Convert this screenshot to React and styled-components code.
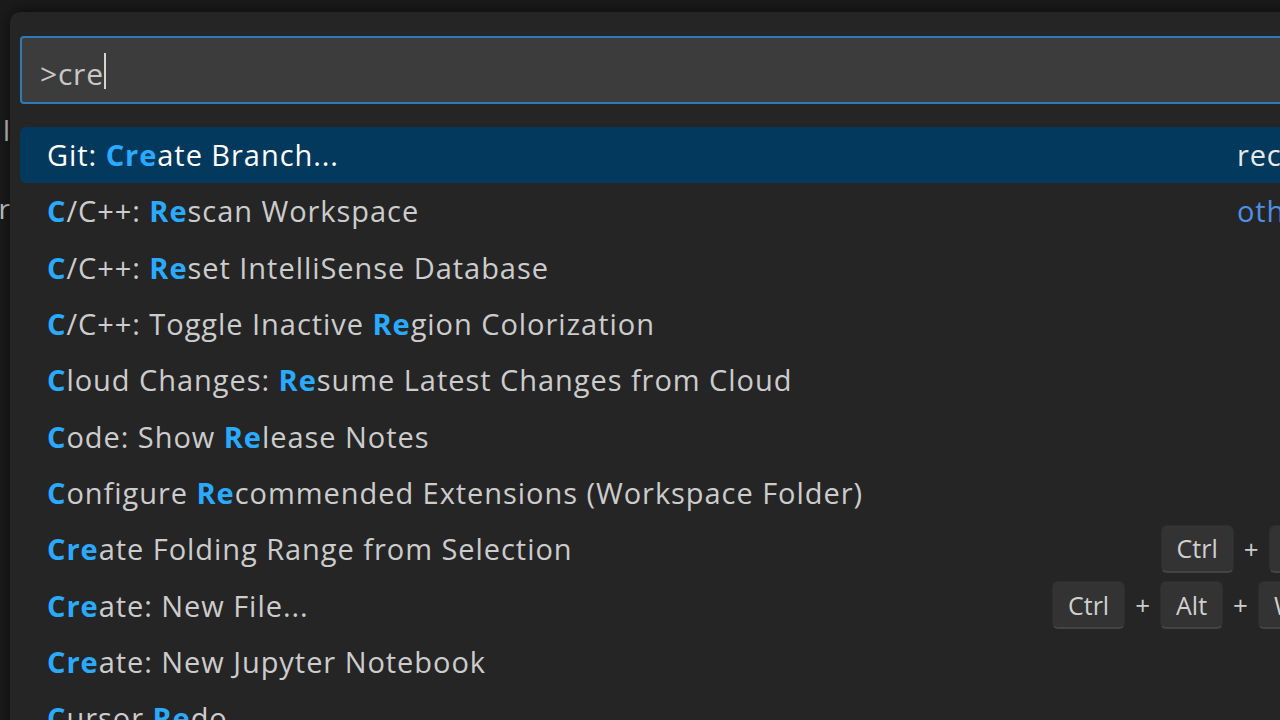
import React from "react";
import styled, { createGlobalStyle } from "styled-components";

const GlobalStyle = createGlobalStyle`
  html, body {
    margin: 0;
    height: 100%;
    overflow: hidden;
    background: #1b1b1b;
  }
  #root {
    height: 100%;
  }
`;

const Page = styled.div`
  position: relative;
  width: 1280px;
  height: 720px;
  overflow: hidden;
  background: #1b1b1b;
  font-family: "Segoe UI", "Open Sans", "Noto Sans", sans-serif;
`;

const Gutter = styled.div`
  width: 10px;
  height: 100%;
  padding-top: 116px;
  box-sizing: border-box;
  display: flex;
  flex-direction: column;
  align-items: flex-end;
  gap: 50px;
  overflow: hidden;
  color: #c8c8c8;
  font-size: 28px;
  line-height: 28px;
`;

const Palette = styled.div`
  position: absolute;
  left: 10px;
  top: 12px;
  width: 1480px;
  height: 760px;
  padding: 24px 0 0 10px;
  box-sizing: border-box;
  background: #252526;
  border-radius: 10px;
  box-shadow: 0 0 16px rgba(0, 0, 0, 0.6);
`;

const InputBox = styled.div`
  height: 68px;
  box-sizing: border-box;
  display: flex;
  align-items: center;
  padding: 6px 0 0 18px;
  background: #3c3c3c;
  border: 2px solid #2b7cb9;
  border-radius: 4px;
  color: #c8c8c8;
  font-size: 30px;
  letter-spacing: 0.8px;
`;

const Caret = styled.span`
  display: inline-block;
  width: 2px;
  height: 36px;
  margin: -4px 0 0 0;
  background: #d4d4d4;
`;

const List = styled.ul`
  list-style: none;
  margin: 23px 0 0;
  padding: 0;
`;

const Row = styled.li`
  height: 56.3px;
  display: flex;
  align-items: center;
  padding: 0 8px 1px 27px;
  box-sizing: border-box;
  border-radius: 6px;
  font-size: 29px;
  white-space: nowrap;
  color: ${(p) => (p.$selected ? "#ffffff" : "#cccccc")};
  background: ${(p) => (p.$selected ? "#04395e" : "transparent")};
`;

const Text = styled.span`
  letter-spacing: 0.95px;
  white-space: pre;
`;

const Match = styled.b`
  font-weight: 700;
  color: #2aaaff;
`;

const Separator = styled.span`
  margin-left: auto;
  width: 245px;
  letter-spacing: 0.8px;
  color: ${(p) => (p.$blue ? "#4f8fe6" : "#e8e8e8")};
`;

const Keys = styled.span`
  margin-left: auto;
  display: flex;
  align-items: center;
  gap: 10px;
  color: #cccccc;
  font-size: 26px;
`;

const Key = styled.kbd`
  font-family: inherit;
  font-size: 25px;
  height: 48px;
  min-width: 40px;
  box-sizing: border-box;
  display: inline-flex;
  align-items: center;
  justify-content: center;
  padding: 0 15px;
  background: #333334;
  border: 1px solid #2e2e2e;
  border-bottom: 2px solid #444;
  border-radius: 6px;
  color: #d0d0d0;
`;

const Chord = styled.span`
  display: flex;
  align-items: center;
  gap: 10px;
  margin-left: ${(p) => (p.$second ? "8px" : "0")};
`;

function Label({ parts }) {
  return (
    <Text>
      {parts.map((p, i) =>
        i % 2 === 1 ? <Match key={i}>{p}</Match> : <React.Fragment key={i}>{p}</React.Fragment>
      )}
    </Text>
  );
}

function Keybinding({ chords }) {
  return (
    <Keys>
      {chords.map((chord, c) => (
        <Chord key={c} $second={c > 0}>
          {chord.map((k, i) => (
            <React.Fragment key={i}>
              {i > 0 && <span>+</span>}
              <Key>{k}</Key>
            </React.Fragment>
          ))}
        </Chord>
      ))}
    </Keys>
  );
}

const commands = [
  { parts: ["Git: ", "Cre", "ate Branch..."], sep: "recently used" },
  { parts: ["", "C", "/C++: ", "Re", "scan Workspace"], sep: "other commands", blue: true },
  { parts: ["", "C", "/C++: ", "Re", "set IntelliSense Database"] },
  { parts: ["", "C", "/C++: Toggle Inactive ", "Re", "gion Colorization"] },
  { parts: ["", "C", "loud Changes: ", "Re", "sume Latest Changes from Cloud"] },
  { parts: ["", "C", "ode: Show ", "Re", "lease Notes"] },
  { parts: ["", "C", "onfigure ", "Re", "commended Extensions (Workspace Folder)"] },
  { parts: ["", "Cre", "ate Folding Range from Selection"], keys: [["Ctrl", "K"], ["Ctrl", ","]] },
  { parts: ["", "Cre", "ate: New File..."], keys: [["Ctrl", "Alt", "Windows", "N"]] },
  { parts: ["", "Cre", "ate: New Jupyter Notebook"] },
  { parts: ["", "C", "ursor ", "Re", "do"] },
];

export default function App() {
  return (
    <Page>
      <GlobalStyle />
      <Gutter>
        <span>l</span>
        <span>r</span>
      </Gutter>
      <Palette>
        <InputBox>
          &gt;cre
          <Caret />
        </InputBox>
        <List>
          {commands.map((cmd, i) => (
            <Row key={i} $selected={i === 0}>
              <Label parts={cmd.parts} />
              {cmd.sep && <Separator $blue={cmd.blue}>{cmd.sep}</Separator>}
              {cmd.keys && <Keybinding chords={cmd.keys} />}
            </Row>
          ))}
        </List>
      </Palette>
    </Page>
  );
}
